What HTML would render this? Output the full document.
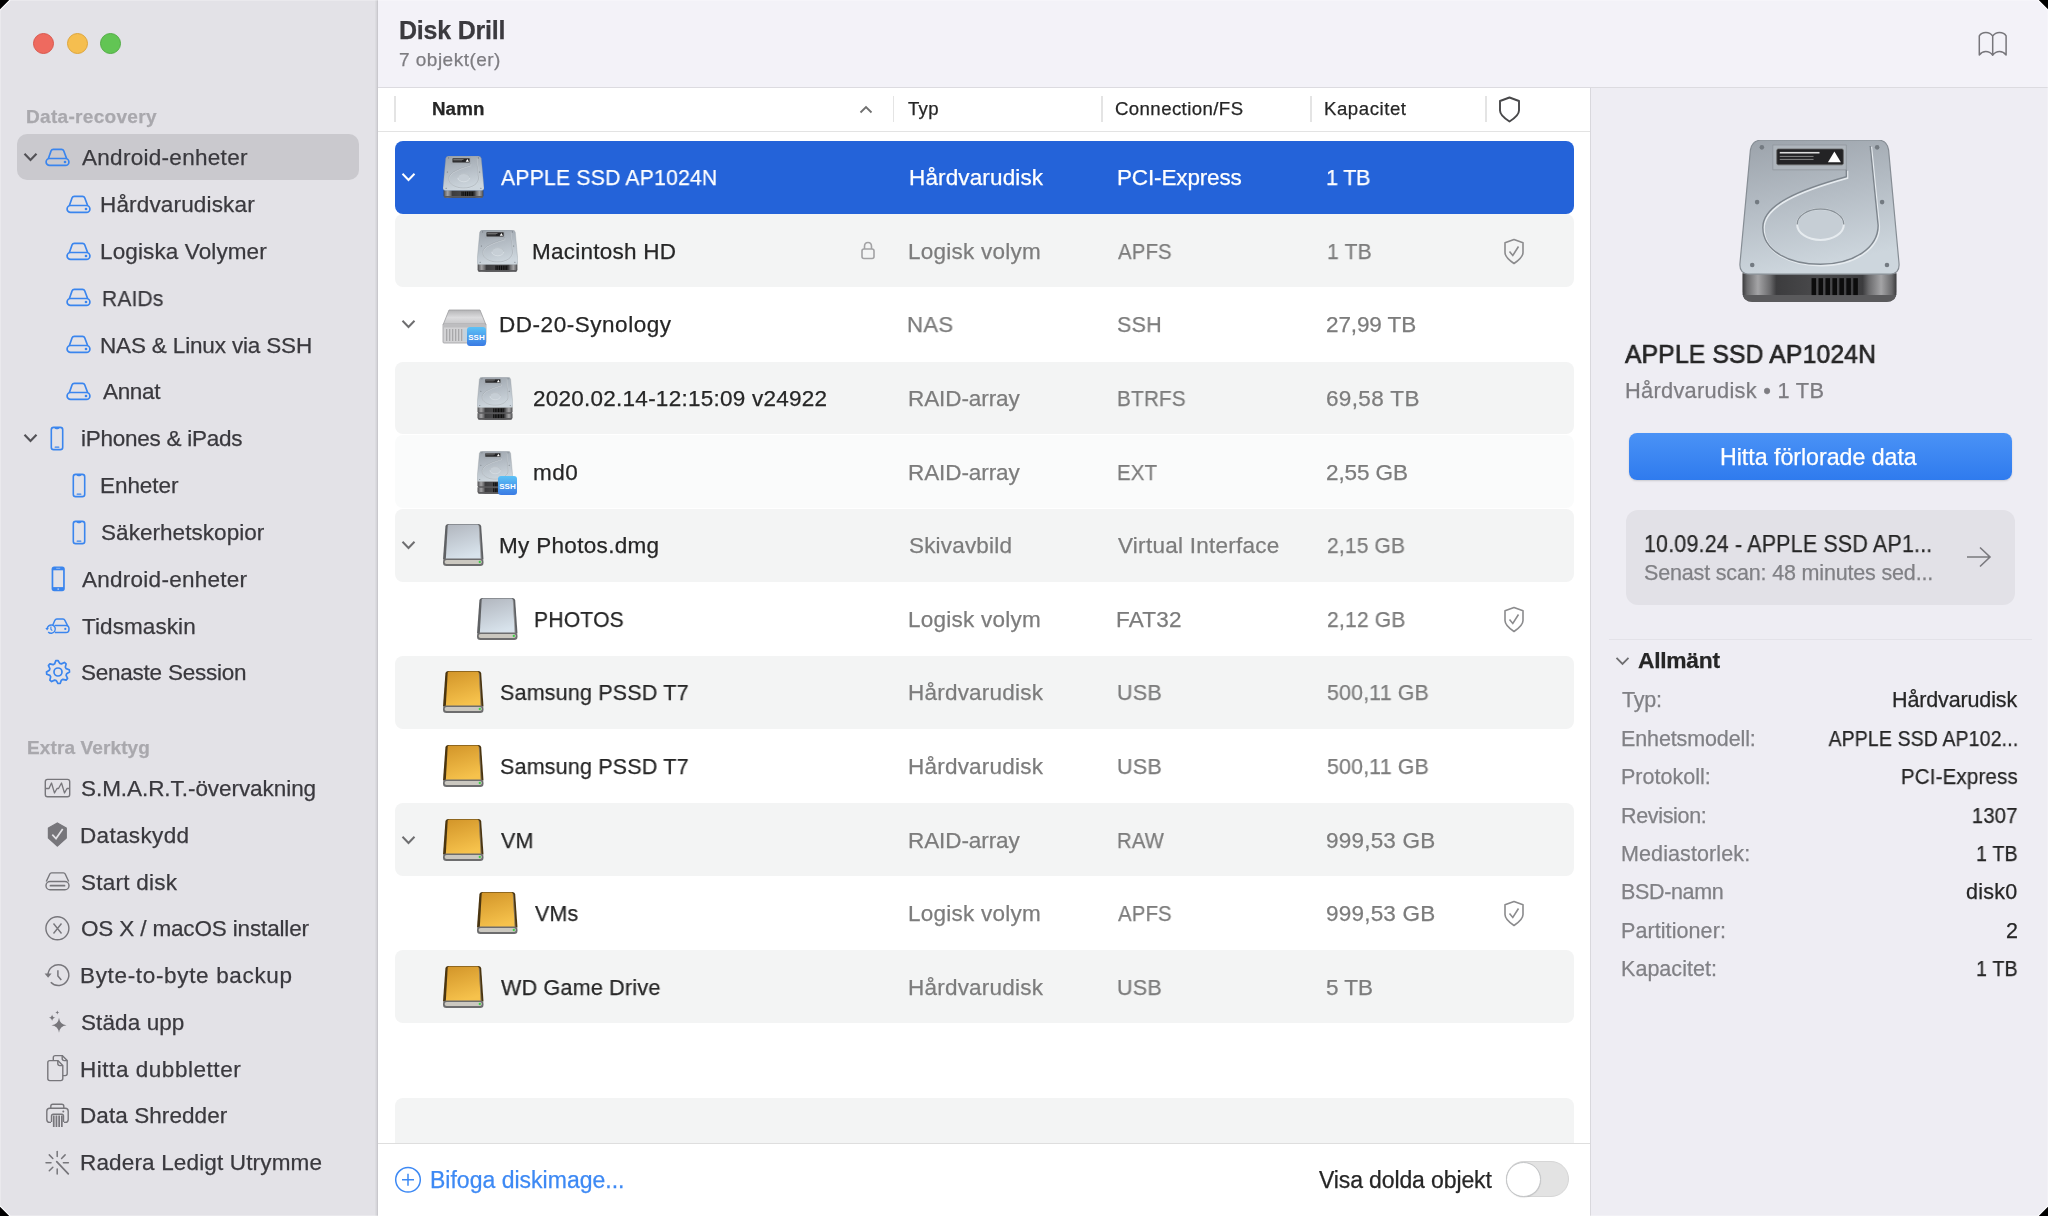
<!DOCTYPE html>
<html><head><meta charset="utf-8">
<style>
*{margin:0;padding:0;box-sizing:border-box}
html,body{width:2048px;height:1216px;overflow:hidden;background:#000}
body{font-family:"Liberation Sans",sans-serif;position:relative}
#win{position:absolute;left:0;top:0;width:2048px;height:1216px;overflow:hidden;background:#fff;clip-path:polygon(9.5px 0,2038.5px 0,2048px 9.5px,2048px 1206.5px,2038.5px 1216px,9.5px 1216px,0 1206.5px,0 9.5px)}
.abs{position:absolute}
.t{position:absolute;white-space:nowrap;line-height:1;will-change:transform;-webkit-text-stroke:0.25px currentColor}
#sidebar{position:absolute;left:0;top:0;width:378px;height:1216px;background:#e3e2e7;border-right:1px solid #c9c8cd;box-shadow:inset -2px 0 0 -0.5px #d6d5da}
.light{position:absolute;width:21px;height:21px;border-radius:50%;top:33px}
#title{position:absolute;left:378px;top:0;width:1670px;height:88px;background:#f3f2f8;border-bottom:1px solid #dcdbe0}
#table{position:absolute;left:378px;top:88px;width:1212px;height:1128px;background:#fff;overflow:hidden}
#right{position:absolute;left:1590px;top:88px;width:458px;height:1128px;background:#eeedf3;border-left:1px solid #d9d8dd}
.row{position:absolute;left:17px;width:1179px;border-radius:8px}
.g{background:#f3f4f4}
.h{background:#fafbfb}
.sel{background:#2463d9}
.csep{position:absolute;width:1.5px;background:#e4e4e4;top:7.5px;height:26px}
</style></head><body>

<svg width="0" height="0" style="position:absolute">
<defs>
 <linearGradient id="plate" x1="0" y1="0" x2="0.25" y2="1">
  <stop offset="0" stop-color="#9ba2aa"/><stop offset="0.5" stop-color="#b4bcc4"/><stop offset="1" stop-color="#cdd6dd"/>
 </linearGradient>
 <linearGradient id="base" x1="0" y1="0" x2="1" y2="0">
  <stop offset="0" stop-color="#3a3a3c"/><stop offset="0.03" stop-color="#6a6a6c"/><stop offset="0.1" stop-color="#a4a4a6"/><stop offset="0.18" stop-color="#6a6a6c"/><stop offset="0.22" stop-color="#3c3c3e"/><stop offset="0.5" stop-color="#4a4a4c"/><stop offset="0.78" stop-color="#3c3c3e"/><stop offset="0.82" stop-color="#6a6a6c"/><stop offset="0.9" stop-color="#a4a4a6"/><stop offset="0.97" stop-color="#6a6a6c"/><stop offset="1" stop-color="#3a3a3c"/>
 </linearGradient>
 <linearGradient id="gplate" x1="0.1" y1="0" x2="0.4" y2="1">
  <stop offset="0" stop-color="#b2b7bf"/><stop offset="1" stop-color="#d8e3ec"/>
 </linearGradient>
 <linearGradient id="yplate" x1="0.1" y1="0" x2="0.4" y2="1">
  <stop offset="0" stop-color="#d3962a"/><stop offset="1" stop-color="#f6c24c"/>
 </linearGradient>
 <linearGradient id="sshg" x1="0" y1="0" x2="0" y2="1">
  <stop offset="0" stop-color="#5cc2f6"/><stop offset="1" stop-color="#3a7be4"/>
 </linearGradient>
 <linearGradient id="nasg" x1="0" y1="0" x2="0" y2="1">
  <stop offset="0" stop-color="#b4b4b6"/><stop offset="0.5" stop-color="#dcdcde"/><stop offset="1" stop-color="#c4c4c6"/>
 </linearGradient>
 <g id="hddtop">
  <path d="M23 0 H138 Q148 0 149.5 10 L160 124 Q161 135 150 135 H10 Q-1 135 0 124 L10.5 10 Q12 0 23 0Z" fill="url(#plate)" stroke="#868d94" stroke-width="1.2"/>
  <path d="M33 5 H107 V30 H33Z" fill="#aeb5bc" stroke="#949ba2" stroke-width="1"/>
  <rect x="37" y="9" width="67" height="16" rx="1.5" fill="#232325" stroke="#666" stroke-width="0.8"/>
  <path d="M95 11.5 L101.5 22.5 H88.5Z" fill="#fff"/>
  <rect x="40" y="12" width="40" height="1.6" fill="#ddd"/>
  <rect x="40" y="16" width="34" height="1" fill="#888"/><rect x="40" y="19" width="34" height="1" fill="#888"/>
  <path d="M107 30 V37 C60 50 23 65 23 88 C23 112 50 125 81 125 C115 125 139 108 139 86 L131 6" fill="none" stroke="#e6ebef" stroke-width="2.4" transform="translate(0.8,1)"/>
  <path d="M107 30 V37 C60 50 23 65 23 88 C23 112 50 125 81 125 C115 125 139 108 139 86 L131 6" fill="none" stroke="#7e868e" stroke-width="1.5"/>
  <ellipse cx="81" cy="85" rx="23.5" ry="15.6" fill="#c6ced5" stroke="#e6ebef" stroke-width="2"/>
  <path d="M57.5 85 A23.5 15.6 0 0 1 104.5 85" fill="none" stroke="#8a9299" stroke-width="1.4"/>
  <g fill="#737a81"><circle cx="22" cy="7.4" r="2.3"/><circle cx="138" cy="7.4" r="2.3"/><circle cx="17.2" cy="62.5" r="2.3"/><circle cx="143" cy="62.5" r="2.3"/><circle cx="12.3" cy="125.8" r="2.3"/><circle cx="147.9" cy="125.8" r="2.3"/></g>
 </g>
 <g id="hddbase">
  <path d="M2.5 0 H157.5 V19 Q157.5 29 147.5 29 H12.5 Q2.5 29 2.5 19Z" fill="url(#base)"/>
  <path d="M2.5 22 H157.5 V19 Q157.5 29 147.5 29 H12.5 Q2.5 29 2.5 19Z" fill="#5a5a5c"/>
  <g fill="#0c0c0c"><rect x="72" y="5" width="4.6" height="17"/><rect x="79" y="5" width="4.6" height="17"/><rect x="86" y="5" width="4.6" height="17"/><rect x="93" y="5" width="4.6" height="17"/><rect x="100" y="5" width="4.6" height="17"/><rect x="107" y="5" width="4.6" height="17"/><rect x="114" y="5" width="4.6" height="17"/></g>
 </g>
 <g id="hdd"><use href="#hddbase" transform="translate(0,134)"/><use href="#hddtop"/></g>
 <g id="raid"><use href="#hddbase" transform="translate(0,160)"/><use href="#hddbase" transform="translate(0,134)"/><use href="#hddtop"/></g>
 <g id="ssh"><rect x="0" y="0" width="19" height="19" rx="3" fill="url(#sshg)"/><text x="9.5" y="13" font-family="Liberation Sans" font-weight="bold" font-size="8" fill="#fff" text-anchor="middle">SSH</text></g>
 <g id="nas">
  <path d="M7 1 H38 L44 16 H1Z" fill="url(#nasg)" stroke="#9c9c9e" stroke-width="0.8"/>
  <rect x="1" y="15" width="43" height="19" rx="1" fill="#d2d2d4" stroke="#a0a0a2" stroke-width="0.8"/>
  <rect x="2" y="15.5" width="41" height="3" fill="#bdbdbf"/>
  <g fill="#a8a8aa"><rect x="4" y="20" width="1.3" height="12"/><rect x="7" y="20" width="1.3" height="12"/><rect x="10" y="20" width="1.3" height="12"/><rect x="13" y="20" width="1.3" height="12"/><rect x="16" y="20" width="1.3" height="12"/><rect x="19" y="20" width="1.3" height="12"/></g>
  <rect x="21" y="20" width="4" height="12" fill="#c4d2dc"/>
 </g>
 <g id="extg">
  <path d="M5.4 0 H35.2 Q37.9 0 38.2 2.6 L40.5 35.5 H0 L2.4 2.6 Q2.7 0 5.4 0Z" fill="#5f6164"/>
  <path d="M6.2 0.6 H34.4 Q35.6 0.6 35.8 1.8 L37.8 35.5 H2.8 L4.7 1.8 Q4.9 0.6 6.2 0.6Z" fill="url(#gplate)"/>
  <path d="M35.8 1.8 L37.8 35.5 H38.6 L36.6 2.4Z" fill="#ffffff" fill-opacity="0.35"/>
  <rect x="0" y="34.6" width="40.5" height="7.5" rx="3.3" fill="#6d6d6e"/>
  <rect x="1.6" y="36" width="37.3" height="4" rx="2" fill="#cbc8c0"/>
  <circle cx="36.8" cy="38" r="1.15" fill="#3ed046"/>
 </g>
 <g id="exty">
  <path d="M5.4 0 H35.2 Q37.9 0 38.2 2.6 L40.5 35.5 H0 L2.4 2.6 Q2.7 0 5.4 0Z" fill="#4a3510"/>
  <path d="M6.2 0.6 H34.4 Q35.6 0.6 35.8 1.8 L37.8 35.5 H2.8 L4.7 1.8 Q4.9 0.6 6.2 0.6Z" fill="url(#yplate)"/>
  <path d="M35.8 1.8 L37.8 35.5 H38.6 L36.6 2.4Z" fill="#ffffff" fill-opacity="0.35"/>
  <rect x="0" y="34.6" width="40.5" height="7.5" rx="3.3" fill="#6d6d6e"/>
  <rect x="1.6" y="36" width="37.3" height="4" rx="2" fill="#cbc8c0"/>
  <circle cx="36.8" cy="38" r="1.15" fill="#3ed046"/>
 </g>
</defs></svg>
<div id="win">
<div id="sidebar">
<div class="light" style="left:33px;background:#ee6a5f;border:0.5px solid #d9574d"></div>
<div class="light" style="left:66.5px;background:#f5be4f;border:0.5px solid #dea53a"></div>
<div class="light" style="left:100px;background:#62c554;border:0.5px solid #52ad45"></div>
<div id="s_dr" class="t" style="left:25.90px;top:107.21px;font-size:19px;font-weight:bold;color:#a9a8ad;letter-spacing:0.314px;">Data-recovery</div>
<div class="abs" style="left:17px;top:134px;width:342px;height:46px;border-radius:10px;background:#cac9ce"></div>
<svg class="abs" style="left:23px;top:152.00px" width="15" height="10" viewBox="0 0 15 10"><path d="M1.5 1.8 L7.5 8 L13.5 1.8" fill="none" stroke="#535257" stroke-width="2.2"/></svg>
<svg class="abs" style="left:45px;top:147.0px" width="26" height="20" viewBox="0 0 26 20"><path d="M3.4 11.5 L6.1 3.8 Q6.7 2.3 8.3 2.3 H16.5 Q18.1 2.3 18.7 3.8 L21.6 11.5" fill="none" stroke="#3a85ee" stroke-width="1.7" stroke-linejoin="round"/><rect x="1.1" y="11.5" width="22.8" height="6.9" rx="3.45" fill="none" stroke="#3a85ee" stroke-width="1.7"/><circle cx="20" cy="14.95" r="1.3" fill="#3a85ee"/></svg>
<div id="s1_0" class="t" style="left:81.80px;top:147.25px;font-size:22.5px;font-weight:normal;color:#3a393e;letter-spacing:0.291px;">Android-enheter</div>
<svg class="abs" style="left:66px;top:193.83px" width="26" height="20" viewBox="0 0 26 20"><path d="M3.4 11.5 L6.1 3.8 Q6.7 2.3 8.3 2.3 H16.5 Q18.1 2.3 18.7 3.8 L21.6 11.5" fill="none" stroke="#3a85ee" stroke-width="1.7" stroke-linejoin="round"/><rect x="1.1" y="11.5" width="22.8" height="6.9" rx="3.45" fill="none" stroke="#3a85ee" stroke-width="1.7"/><circle cx="20" cy="14.95" r="1.3" fill="#3a85ee"/></svg>
<div id="s1_1" class="t" style="left:100.40px;top:194.08px;font-size:22.5px;font-weight:normal;color:#3a393e;letter-spacing:0.159px;">Hårdvarudiskar</div>
<svg class="abs" style="left:66px;top:240.66px" width="26" height="20" viewBox="0 0 26 20"><path d="M3.4 11.5 L6.1 3.8 Q6.7 2.3 8.3 2.3 H16.5 Q18.1 2.3 18.7 3.8 L21.6 11.5" fill="none" stroke="#3a85ee" stroke-width="1.7" stroke-linejoin="round"/><rect x="1.1" y="11.5" width="22.8" height="6.9" rx="3.45" fill="none" stroke="#3a85ee" stroke-width="1.7"/><circle cx="20" cy="14.95" r="1.3" fill="#3a85ee"/></svg>
<div id="s1_2" class="t" style="left:100.40px;top:240.91px;font-size:22.5px;font-weight:normal;color:#3a393e;letter-spacing:0.119px;">Logiska Volymer</div>
<svg class="abs" style="left:66px;top:287.49px" width="26" height="20" viewBox="0 0 26 20"><path d="M3.4 11.5 L6.1 3.8 Q6.7 2.3 8.3 2.3 H16.5 Q18.1 2.3 18.7 3.8 L21.6 11.5" fill="none" stroke="#3a85ee" stroke-width="1.7" stroke-linejoin="round"/><rect x="1.1" y="11.5" width="22.8" height="6.9" rx="3.45" fill="none" stroke="#3a85ee" stroke-width="1.7"/><circle cx="20" cy="14.95" r="1.3" fill="#3a85ee"/></svg>
<div id="s1_3" class="t" style="left:101.60px;top:287.74px;font-size:22.5px;font-weight:normal;color:#3a393e;letter-spacing:0.200px;transform:scaleX(0.9330);transform-origin:left center;">RAIDs</div>
<svg class="abs" style="left:66px;top:334.32px" width="26" height="20" viewBox="0 0 26 20"><path d="M3.4 11.5 L6.1 3.8 Q6.7 2.3 8.3 2.3 H16.5 Q18.1 2.3 18.7 3.8 L21.6 11.5" fill="none" stroke="#3a85ee" stroke-width="1.7" stroke-linejoin="round"/><rect x="1.1" y="11.5" width="22.8" height="6.9" rx="3.45" fill="none" stroke="#3a85ee" stroke-width="1.7"/><circle cx="20" cy="14.95" r="1.3" fill="#3a85ee"/></svg>
<div id="s1_4" class="t" style="left:100.40px;top:334.57px;font-size:22.5px;font-weight:normal;color:#3a393e;letter-spacing:-0.160px;">NAS &amp; Linux via SSH</div>
<svg class="abs" style="left:66px;top:381.15px" width="26" height="20" viewBox="0 0 26 20"><path d="M3.4 11.5 L6.1 3.8 Q6.7 2.3 8.3 2.3 H16.5 Q18.1 2.3 18.7 3.8 L21.6 11.5" fill="none" stroke="#3a85ee" stroke-width="1.7" stroke-linejoin="round"/><rect x="1.1" y="11.5" width="22.8" height="6.9" rx="3.45" fill="none" stroke="#3a85ee" stroke-width="1.7"/><circle cx="20" cy="14.95" r="1.3" fill="#3a85ee"/></svg>
<div id="s1_5" class="t" style="left:102.60px;top:381.40px;font-size:22.5px;font-weight:normal;color:#3a393e;letter-spacing:-0.350px;transform:scaleX(0.9991);transform-origin:left center;">Annat</div>
<svg class="abs" style="left:23px;top:432.98px" width="15" height="10" viewBox="0 0 15 10"><path d="M1.5 1.8 L7.5 8 L13.5 1.8" fill="none" stroke="#535257" stroke-width="2.2"/></svg>
<svg class="abs" style="left:50px;top:425.98px" width="14" height="25" viewBox="0 0 14 25"><rect x="1.3" y="1.4" width="11.4" height="22.2" rx="2.4" fill="none" stroke="#3a85ee" stroke-width="1.6"/><path d="M4.3 1.5 H9.7 Q9.5 3.2 7.8 3.2 H6.2 Q4.5 3.2 4.3 1.5Z" fill="#3a85ee"/><rect x="4.6" y="20.6" width="4.8" height="1.1" rx="0.5" fill="#3a85ee"/></svg>
<div id="s1_6" class="t" style="left:80.80px;top:428.23px;font-size:22.5px;font-weight:normal;color:#3a393e;letter-spacing:-0.253px;">iPhones &amp; iPads</div>
<svg class="abs" style="left:72px;top:472.81px" width="14" height="25" viewBox="0 0 14 25"><rect x="1.3" y="1.4" width="11.4" height="22.2" rx="2.4" fill="none" stroke="#3a85ee" stroke-width="1.6"/><path d="M4.3 1.5 H9.7 Q9.5 3.2 7.8 3.2 H6.2 Q4.5 3.2 4.3 1.5Z" fill="#3a85ee"/><rect x="4.6" y="20.6" width="4.8" height="1.1" rx="0.5" fill="#3a85ee"/></svg>
<div id="s1_7" class="t" style="left:100.40px;top:475.06px;font-size:22.5px;font-weight:normal;color:#3a393e;letter-spacing:-0.060px;">Enheter</div>
<svg class="abs" style="left:72px;top:519.64px" width="14" height="25" viewBox="0 0 14 25"><rect x="1.3" y="1.4" width="11.4" height="22.2" rx="2.4" fill="none" stroke="#3a85ee" stroke-width="1.6"/><path d="M4.3 1.5 H9.7 Q9.5 3.2 7.8 3.2 H6.2 Q4.5 3.2 4.3 1.5Z" fill="#3a85ee"/><rect x="4.6" y="20.6" width="4.8" height="1.1" rx="0.5" fill="#3a85ee"/></svg>
<div id="s1_8" class="t" style="left:101.40px;top:521.89px;font-size:22.5px;font-weight:normal;color:#3a393e;letter-spacing:0.053px;">Säkerhetskopior</div>
<svg class="abs" style="left:50.5px;top:566.47px" width="16" height="26" viewBox="0 0 16 26"><rect x="0.6" y="0.6" width="13.2" height="24.6" rx="2.6" fill="#3a85ee"/><rect x="2.3" y="4.3" width="9.8" height="16.8" fill="#e3e2e7"/><rect x="5.2" y="1.8" width="4" height="0.9" fill="#e3e2e7" fill-opacity="0.6"/><circle cx="7.2" cy="23.1" r="0.9" fill="#e3e2e7" fill-opacity="0.7"/></svg>
<div id="s1_9" class="t" style="left:81.80px;top:568.72px;font-size:22.5px;font-weight:normal;color:#3a393e;letter-spacing:0.264px;">Android-enheter</div>
<svg class="abs" style="left:45px;top:615.3px" width="26" height="20" viewBox="0 0 26 20"><path d="M7.6 10.5 L9.9 5.3 Q10.5 4.1 11.8 4.1 H18 Q19.3 4.1 19.9 5.3 L22.5 10.5" fill="none" stroke="#3a85ee" stroke-width="1.5" stroke-linejoin="round"/><path d="M9.5 10.5 H21 Q24 10.5 24 14 Q24 17.6 21 17.6 H9.8" fill="none" stroke="#3a85ee" stroke-width="1.5"/><circle cx="20.3" cy="13.9" r="1.1" fill="#3a85ee"/><path d="M2.1 14.1 A4.1 4.1 0 1 1 3.2 16.9" fill="none" stroke="#3a85ee" stroke-width="1.4"/><path d="M0.4 12.9 L3.8 12.9 L2.1 15.4Z" fill="#3a85ee"/><path d="M5.9 11.6 V14.2 L7.3 15.6" fill="none" stroke="#3a85ee" stroke-width="1.1"/></svg>
<div id="s1_10" class="t" style="left:81.80px;top:615.55px;font-size:22.5px;font-weight:normal;color:#3a393e;letter-spacing:0.080px;">Tidsmaskin</div>
<svg class="abs" style="left:45px;top:659.13px" width="26" height="26" viewBox="0 0 26 26"><polygon points="24.28,10.76 24.50,13.00 21.63,14.72 21.13,16.37 22.56,19.39 21.13,21.13 17.89,20.32 16.37,21.13 15.24,24.28 13.00,24.50 11.28,21.63 9.63,21.13 6.61,22.56 4.87,21.13 5.68,17.89 4.87,16.37 1.72,15.24 1.50,13.00 4.37,11.28 4.87,9.63 3.44,6.61 4.87,4.87 8.11,5.68 9.63,4.87 10.76,1.72 13.00,1.50 14.72,4.37 16.37,4.87 19.39,3.44 21.13,4.87 20.32,8.11 21.13,9.63" fill="none" stroke="#3a85ee" stroke-width="1.7" stroke-linejoin="round"/><circle cx="13" cy="13" r="4" fill="none" stroke="#3a85ee" stroke-width="1.7"/></svg>
<div id="s1_11" class="t" style="left:80.80px;top:662.38px;font-size:22.5px;font-weight:normal;color:#3a393e;letter-spacing:-0.241px;">Senaste Session</div>
<div id="s_ev" class="t" style="left:26.70px;top:737.61px;font-size:19px;font-weight:bold;color:#a9a8ad;letter-spacing:0.120px;">Extra Verktyg</div>
<svg class="abs" style="left:40px;top:771.70px" width="36" height="32" viewBox="0 0 36 32"><rect x="5.3" y="7.4" width="24.4" height="17.4" rx="2.2" fill="none" stroke="#77767b" stroke-width="1.4"/><path d="M6 16.5 H9 L11.5 11 L14.5 21 L17 16.5 H18.5 L21.5 11 L24.5 21 L27 16.5 H29" fill="none" stroke="#77767b" stroke-width="1.3" stroke-linejoin="round"/></svg>
<div id="s2_0" class="t" style="left:80.50px;top:777.95px;font-size:22.5px;font-weight:normal;color:#3a393e;letter-spacing:-0.057px;">S.M.A.R.T.-övervakning</div>
<svg class="abs" style="left:40px;top:818.48px" width="36" height="32" viewBox="0 0 36 32"><path d="M17.35 5 L26.2 10 V20 L17.35 28 L8.5 20 V10Z" fill="#77767b" stroke="#77767b" stroke-width="1.4" stroke-linejoin="round"/><path d="M12.3 16.7 L16 20.6 L22.7 10.9" fill="none" stroke="#e3e2e7" stroke-width="1.7"/></svg>
<div id="s2_1" class="t" style="left:79.50px;top:824.73px;font-size:22.5px;font-weight:normal;color:#3a393e;letter-spacing:0.337px;">Dataskydd</div>
<svg class="abs" style="left:40px;top:865.26px" width="36" height="32" viewBox="0 0 36 32"><path d="M6.3 16.5 L9.8 9 Q10.3 7.9 11.5 7.9 H23.5 Q24.7 7.9 25.2 9 L28.7 16.5" fill="none" stroke="#77767b" stroke-width="1.4"/><rect x="6" y="16.5" width="23" height="8.3" rx="4.1" fill="none" stroke="#77767b" stroke-width="1.4"/><path d="M10.5 20.7 H24.5" stroke="#77767b" stroke-width="1.8" stroke-linecap="round"/></svg>
<div id="s2_2" class="t" style="left:80.50px;top:871.51px;font-size:22.5px;font-weight:normal;color:#3a393e;letter-spacing:0.260px;">Start disk</div>
<svg class="abs" style="left:40px;top:912.04px" width="36" height="32" viewBox="0 0 36 32"><circle cx="17.4" cy="16.3" r="11.5" fill="none" stroke="#77767b" stroke-width="1.4"/><path d="M13.5 11.5 L21.5 21.5 M21.5 11.5 L13.5 21.5" fill="none" stroke="#77767b" stroke-width="1.4"/></svg>
<div id="s2_3" class="t" style="left:80.50px;top:918.29px;font-size:22.5px;font-weight:normal;color:#3a393e;letter-spacing:-0.157px;">OS X / macOS installer</div>
<svg class="abs" style="left:40px;top:958.82px" width="36" height="32" viewBox="0 0 36 32"><path d="M8 16.4 A10.4 10.4 0 1 1 10.8 23.2" fill="none" stroke="#77767b" stroke-width="1.5"/><path d="M4.6 14.4 L11.6 14.4 L8.1 18.8Z" fill="#77767b"/><path d="M17.9 11.2 V17 L21.3 21.1" fill="none" stroke="#77767b" stroke-width="1.5"/></svg>
<div id="s2_4" class="t" style="left:79.50px;top:965.07px;font-size:22.5px;font-weight:normal;color:#3a393e;letter-spacing:0.660px;">Byte-to-byte backup</div>
<svg class="abs" style="left:40px;top:1005.60px" width="36" height="32" viewBox="0 0 36 32"><path d="M19 11.8 Q19.8 18.5 26.5 19.3 Q19.8 20.1 19 26.8 Q18.2 20.1 11.5 19.3 Q18.2 18.5 19 11.8Z" fill="#77767b"/><path d="M12.1 8.5 Q12.5 11.4 15.4 11.8 Q12.5 12.2 12.1 15.1 Q11.7 12.2 8.8 11.8 Q11.7 11.4 12.1 8.5Z" fill="#77767b"/><path d="M17.3 4.6 Q17.5 6.4 19.3 6.6 Q17.5 6.8 17.3 8.6 Q17.1 6.8 15.3 6.6 Q17.1 6.4 17.3 4.6Z" fill="#77767b"/></svg>
<div id="s2_5" class="t" style="left:80.50px;top:1011.85px;font-size:22.5px;font-weight:normal;color:#3a393e;letter-spacing:0.098px;">Städa upp</div>
<svg class="abs" style="left:40px;top:1052.38px" width="36" height="32" viewBox="0 0 36 32"><g fill="none" stroke="#77767b" stroke-width="1.4" stroke-linejoin="round"><path d="M13.3 8.6 V5.6 Q13.3 3.6 15.3 3.6 H22.2 L27.2 8.6 V21.6 Q27.2 23.6 25.2 23.6 H22.8"/><path d="M22.2 3.6 V6.6 Q22.2 8.6 24.2 8.6 H27.2"/><path d="M9.8 8.6 H17.8 L22.8 13.6 V26.6 Q22.8 28.6 20.8 28.6 H9.8 Q7.8 28.6 7.8 26.6 V10.6 Q7.8 8.6 9.8 8.6Z"/><path d="M17.8 8.6 V11.6 Q17.8 13.6 19.8 13.6 H22.8"/></g></svg>
<div id="s2_6" class="t" style="left:79.50px;top:1058.63px;font-size:22.5px;font-weight:normal;color:#3a393e;letter-spacing:0.540px;">Hitta dubbletter</div>
<svg class="abs" style="left:40px;top:1099.16px" width="36" height="32" viewBox="0 0 36 32"><g fill="none" stroke="#77767b" stroke-width="1.4"><path d="M11 23.4 H9.8 Q6.8 23.4 6.8 20.4 V12.2 Q6.8 9.2 9.8 9.2 H25.2 Q28.2 9.2 28.2 12.2 V20.4 Q28.2 23.4 25.2 23.4 H24"/><path d="M10.8 9.2 V7.2 Q10.8 5.2 12.8 5.2 H21.8 Q23.8 5.2 23.8 7.2 V9.2"/><path d="M11.5 23 V17 Q11.5 15.2 13.3 15.2 H21.7 Q23.5 15.2 23.5 17 V23"/></g><g fill="#77767b"><rect x="12.9" y="16.5" width="1.7" height="11.5"/><rect x="15.6" y="16.5" width="1.7" height="11.5"/><rect x="18.3" y="16.5" width="1.7" height="11.5"/><rect x="21" y="16.5" width="1.7" height="11.5"/><circle cx="23.3" cy="12.5" r="1"/></g></svg>
<div id="s2_7" class="t" style="left:79.50px;top:1105.41px;font-size:22.5px;font-weight:normal;color:#3a393e;letter-spacing:0.075px;">Data Shredder</div>
<svg class="abs" style="left:40px;top:1145.94px" width="36" height="32" viewBox="0 0 36 32"><g stroke="#77767b" stroke-width="1.5" stroke-linecap="round"><line x1="23.40" y1="16.80" x2="28.40" y2="16.80"/><line x1="17.20" y1="23.00" x2="17.20" y2="28.00"/><line x1="12.82" y1="21.18" x2="9.28" y2="24.72"/><line x1="11.00" y1="16.80" x2="6.00" y2="16.80"/><line x1="12.82" y1="12.42" x2="9.28" y2="8.88"/><line x1="17.20" y1="10.60" x2="17.20" y2="5.60"/><line x1="21.58" y1="12.42" x2="25.12" y2="8.88"/><line x1="16.7" y1="15.7" x2="28.3" y2="27.9" stroke-width="1.7"/></g></svg>
<div id="s2_8" class="t" style="left:79.50px;top:1152.19px;font-size:22.5px;font-weight:normal;color:#3a393e;letter-spacing:0.155px;">Radera Ledigt Utrymme</div>
</div>
<div id="title">
<div id="ti" class="t" style="left:20.70px;top:18.33px;font-size:25px;font-weight:bold;color:#3b3a3f;letter-spacing:-0.220px;">Disk Drill</div>
<div id="ti2" class="t" style="left:20.60px;top:50.41px;font-size:19px;font-weight:normal;color:#7d7c81;letter-spacing:0.481px;">7 objekt(er)</div>
<svg class="abs" style="left:1592px;top:25px" width="44" height="36" viewBox="0 0 44 36"><g fill="none" stroke="#77767b" stroke-width="1.5" stroke-linejoin="round"><path d="M22.7 11 C21 8.6 18.6 7.4 15.9 7.4 C13.1 7.4 10.6 8.6 9.3 10.8 V30 Q12 26.6 15.8 26.6 Q19.8 26.6 22.7 30.2 Q25.6 26.6 29.6 26.6 Q33.4 26.6 36.1 30 V10.8 C34.8 8.6 32.3 7.4 29.5 7.4 C26.8 7.4 24.4 8.6 22.7 11 V30.2"/></g></svg>
</div>
<div id="table">
<div class="abs" style="left:0;top:42.5px;width:1212px;height:1.5px;background:#e3e3e3"></div>
<div class="csep" style="left:16px"></div>
<div class="csep" style="left:514.5px"></div>
<div class="csep" style="left:723px"></div>
<div class="csep" style="left:932px"></div>
<div class="csep" style="left:1107px"></div>
<div id="h_namn" class="t" style="left:54.00px;top:12.28px;font-size:18.8px;font-weight:bold;color:#262626;letter-spacing:0.060px;">Namn</div>
<svg class="abs" style="left:481px;top:17px" width="14" height="9" viewBox="0 0 14 9"><path d="M1.5 7.5 L7 2 L12.5 7.5" fill="none" stroke="#707070" stroke-width="1.8"/></svg>
<div id="h_typ" class="t" style="left:529.80px;top:12.45px;font-size:18.6px;font-weight:normal;color:#262626;letter-spacing:0.270px;">Typ</div>
<div id="h_conn" class="t" style="left:737.40px;top:12.45px;font-size:18.6px;font-weight:normal;color:#262626;letter-spacing:0.420px;">Connection/FS</div>
<div id="h_kap" class="t" style="left:946.40px;top:12.45px;font-size:18.6px;font-weight:normal;color:#262626;letter-spacing:0.563px;">Kapacitet</div>
<svg class="abs" style="left:1120px;top:7.5px" width="23" height="27" viewBox="0 0 23 27"><path d="M11.5 1.5 L21 5 V14.5 Q21 19.5 11.5 25.5 Q2 19.5 2 14.5 V5Z" fill="none" stroke="#48484a" stroke-width="1.9" stroke-linejoin="round"/></svg>
<div class="row sel" style="top:52.70px;height:72.9px">
<svg class="abs" style="left:6px;top:31.5px" width="15" height="10" viewBox="0 0 15 10"><path d="M1.5 1.8 L7.5 8 L13.5 1.8" fill="none" stroke="#fff" stroke-width="2"/></svg>
<svg class="abs" style="left:48px;top:15.450000000000003px" width="41" height="42" viewBox="0 0 160 164"><use href="#hdd"/></svg>
<div id="r0n" class="t" style="left:106.20px;top:26.45px;font-size:22.5px;font-weight:normal;color:#fff;letter-spacing:0.200px;transform:scaleX(0.9420);transform-origin:left center;">APPLE SSD AP1024N</div>
<div id="r0t" class="t" style="left:513.60px;top:26.45px;font-size:22.5px;font-weight:normal;color:#fff;letter-spacing:0.137px;">Hårdvarudisk</div>
<div id="r0c" class="t" style="left:722.00px;top:26.45px;font-size:22.5px;font-weight:normal;color:#fff;letter-spacing:-0.144px;">PCI-Express</div>
<div id="r0k" class="t" style="left:931.30px;top:26.45px;font-size:22.5px;font-weight:normal;color:#fff;letter-spacing:-0.350px;transform:scaleX(0.9669);transform-origin:left center;">1 TB</div>
</div>
<div class="row g" style="top:126.30px;height:72.9px">
<svg class="abs" style="left:82px;top:15.450000000000003px" width="41" height="42" viewBox="0 0 160 164"><use href="#hdd"/></svg>
<div id="r1n" class="t" style="left:137.20px;top:26.45px;font-size:22.5px;font-weight:normal;color:#262626;letter-spacing:0.246px;">Macintosh HD</div>
<div id="r1t" class="t" style="left:512.60px;top:26.45px;font-size:22.5px;font-weight:normal;color:#7c7c7c;letter-spacing:0.256px;">Logisk volym</div>
<div id="r1c" class="t" style="left:723.00px;top:26.45px;font-size:22.5px;font-weight:normal;color:#7c7c7c;letter-spacing:0.200px;transform:scaleX(0.9034);transform-origin:left center;">APFS</div>
<div id="r1k" class="t" style="left:931.60px;top:26.45px;font-size:22.5px;font-weight:normal;color:#7c7c7c;letter-spacing:0.200px;transform:scaleX(0.9363);transform-origin:left center;">1 TB</div>
<svg class="abs" style="left:466px;top:26.5px" width="14" height="19" viewBox="0 0 14 19"><path d="M3.5 8 V5.5 Q3.5 1.5 7 1.5 Q10.5 1.5 10.5 5.5 V8" fill="none" stroke="#a2a2a4" stroke-width="1.6"/><rect x="1" y="8" width="12" height="9.5" rx="2" fill="none" stroke="#a2a2a4" stroke-width="1.6"/></svg>
<svg class="abs" style="left:1108px;top:23.5px" width="22" height="27" viewBox="0 0 22 27"><path d="M11 1.5 L20 4.8 V14.5 Q20 19.5 11 25.5 Q2 19.5 2 14.5 V4.8Z" fill="none" stroke="#8b8b8d" stroke-width="1.6" stroke-linejoin="round"/><path d="M6.5 13.5 L9.8 17.5 L15.5 8.5" fill="none" stroke="#8b8b8d" stroke-width="1.6"/></svg>
</div>
<div class="row " style="top:199.90px;height:72.9px">
<svg class="abs" style="left:6px;top:31.5px" width="15" height="10" viewBox="0 0 15 10"><path d="M1.5 1.8 L7.5 8 L13.5 1.8" fill="none" stroke="#6e6e70" stroke-width="2"/></svg>
<svg class="abs" style="left:47px;top:20.950000000000003px" width="45" height="36" viewBox="0 0 45 36"><use href="#nas"/></svg><svg class="abs" style="left:72px;top:39.45px" width="19" height="19" viewBox="0 0 19 19"><use href="#ssh"/></svg>
<div id="r2n" class="t" style="left:104.30px;top:26.45px;font-size:22.5px;font-weight:normal;color:#262626;letter-spacing:0.537px;">DD-20-Synology</div>
<div id="r2t" class="t" style="left:512.40px;top:26.45px;font-size:22.5px;font-weight:normal;color:#7c7c7c;letter-spacing:0.200px;transform:scaleX(0.9868);transform-origin:left center;">NAS</div>
<div id="r2c" class="t" style="left:722.00px;top:26.45px;font-size:22.5px;font-weight:normal;color:#7c7c7c;letter-spacing:0.200px;transform:scaleX(0.9553);transform-origin:left center;">SSH</div>
<div id="r2k" class="t" style="left:930.90px;top:26.45px;font-size:22.5px;font-weight:normal;color:#7c7c7c;letter-spacing:-0.107px;">27,99 TB</div>
</div>
<div class="row g" style="top:273.50px;height:72.9px">
<svg class="abs" style="left:82px;top:15.450000000000003px" width="36" height="43" viewBox="0 0 160 190"><use href="#raid"/></svg>
<div id="r3n" class="t" style="left:138.20px;top:26.45px;font-size:22.5px;font-weight:normal;color:#262626;letter-spacing:0.252px;">2020.02.14-12:15:09 v24922</div>
<div id="r3t" class="t" style="left:512.60px;top:26.45px;font-size:22.5px;font-weight:normal;color:#7c7c7c;letter-spacing:-0.080px;">RAID-array</div>
<div id="r3c" class="t" style="left:722.00px;top:26.45px;font-size:22.5px;font-weight:normal;color:#7c7c7c;letter-spacing:0.200px;transform:scaleX(0.9214);transform-origin:left center;">BTRFS</div>
<div id="r3k" class="t" style="left:930.90px;top:26.45px;font-size:22.5px;font-weight:normal;color:#7c7c7c;letter-spacing:0.361px;">69,58 TB</div>
</div>
<div class="row h" style="top:347.10px;height:72.9px">
<svg class="abs" style="left:82px;top:15.450000000000003px" width="36" height="43" viewBox="0 0 160 190"><use href="#raid"/></svg><svg class="abs" style="left:103px;top:40.45px" width="19" height="19" viewBox="0 0 19 19"><use href="#ssh"/></svg>
<div id="r4n" class="t" style="left:138.20px;top:26.45px;font-size:22.5px;font-weight:normal;color:#262626;letter-spacing:0.540px;">md0</div>
<div id="r4t" class="t" style="left:512.60px;top:26.45px;font-size:22.5px;font-weight:normal;color:#7c7c7c;letter-spacing:-0.080px;">RAID-array</div>
<div id="r4c" class="t" style="left:722.00px;top:26.45px;font-size:22.5px;font-weight:normal;color:#7c7c7c;letter-spacing:0.200px;transform:scaleX(0.9051);transform-origin:left center;">EXT</div>
<div id="r4k" class="t" style="left:930.90px;top:26.45px;font-size:22.5px;font-weight:normal;color:#7c7c7c;letter-spacing:-0.090px;">2,55 GB</div>
</div>
<div class="row g" style="top:420.70px;height:72.9px">
<svg class="abs" style="left:6px;top:31.5px" width="15" height="10" viewBox="0 0 15 10"><path d="M1.5 1.8 L7.5 8 L13.5 1.8" fill="none" stroke="#6e6e70" stroke-width="2"/></svg>
<svg class="abs" style="left:48px;top:15.450000000000003px" width="42" height="44" viewBox="0 0 42 44"><use href="#extg"/></svg>
<div id="r5n" class="t" style="left:104.30px;top:26.45px;font-size:22.5px;font-weight:normal;color:#262626;letter-spacing:0.315px;">My Photos.dmg</div>
<div id="r5t" class="t" style="left:513.60px;top:26.45px;font-size:22.5px;font-weight:normal;color:#7c7c7c;letter-spacing:0.180px;">Skivavbild</div>
<div id="r5c" class="t" style="left:723.00px;top:26.45px;font-size:22.5px;font-weight:normal;color:#7c7c7c;letter-spacing:0.261px;">Virtual Interface</div>
<div id="r5k" class="t" style="left:931.60px;top:26.45px;font-size:22.5px;font-weight:normal;color:#7c7c7c;letter-spacing:0.200px;transform:scaleX(0.9310);transform-origin:left center;">2,15 GB</div>
</div>
<div class="row " style="top:494.30px;height:72.9px">
<svg class="abs" style="left:82px;top:15.450000000000003px" width="42" height="44" viewBox="0 0 42 44"><use href="#extg"/></svg>
<div id="r6n" class="t" style="left:138.80px;top:26.45px;font-size:22.5px;font-weight:normal;color:#262626;letter-spacing:0.200px;transform:scaleX(0.9387);transform-origin:left center;">PHOTOS</div>
<div id="r6t" class="t" style="left:512.60px;top:26.45px;font-size:22.5px;font-weight:normal;color:#7c7c7c;letter-spacing:0.256px;">Logisk volym</div>
<div id="r6c" class="t" style="left:721.00px;top:26.45px;font-size:22.5px;font-weight:normal;color:#7c7c7c;letter-spacing:0.224px;">FAT32</div>
<div id="r6k" class="t" style="left:931.60px;top:26.45px;font-size:22.5px;font-weight:normal;color:#7c7c7c;letter-spacing:0.200px;transform:scaleX(0.9356);transform-origin:left center;">2,12 GB</div>
<svg class="abs" style="left:1108px;top:23.5px" width="22" height="27" viewBox="0 0 22 27"><path d="M11 1.5 L20 4.8 V14.5 Q20 19.5 11 25.5 Q2 19.5 2 14.5 V4.8Z" fill="none" stroke="#8b8b8d" stroke-width="1.6" stroke-linejoin="round"/><path d="M6.5 13.5 L9.8 17.5 L15.5 8.5" fill="none" stroke="#8b8b8d" stroke-width="1.6"/></svg>
</div>
<div class="row g" style="top:567.90px;height:72.9px">
<svg class="abs" style="left:48px;top:15.450000000000003px" width="42" height="44" viewBox="0 0 42 44"><use href="#exty"/></svg>
<div id="r7n" class="t" style="left:105.20px;top:26.45px;font-size:22.5px;font-weight:normal;color:#262626;letter-spacing:0.200px;transform:scaleX(0.9550);transform-origin:left center;">Samsung PSSD T7</div>
<div id="r7t" class="t" style="left:512.60px;top:26.45px;font-size:22.5px;font-weight:normal;color:#7c7c7c;letter-spacing:0.218px;">Hårdvarudisk</div>
<div id="r7c" class="t" style="left:722.00px;top:26.45px;font-size:22.5px;font-weight:normal;color:#7c7c7c;letter-spacing:0.200px;transform:scaleX(0.9574);transform-origin:left center;">USB</div>
<div id="r7k" class="t" style="left:931.60px;top:26.45px;font-size:22.5px;font-weight:normal;color:#7c7c7c;letter-spacing:0.200px;transform:scaleX(0.9464);transform-origin:left center;">500,11 GB</div>
</div>
<div class="row " style="top:641.50px;height:72.9px">
<svg class="abs" style="left:48px;top:15.450000000000003px" width="42" height="44" viewBox="0 0 42 44"><use href="#exty"/></svg>
<div id="r8n" class="t" style="left:105.20px;top:26.45px;font-size:22.5px;font-weight:normal;color:#262626;letter-spacing:0.200px;transform:scaleX(0.9550);transform-origin:left center;">Samsung PSSD T7</div>
<div id="r8t" class="t" style="left:512.60px;top:26.45px;font-size:22.5px;font-weight:normal;color:#7c7c7c;letter-spacing:0.218px;">Hårdvarudisk</div>
<div id="r8c" class="t" style="left:722.00px;top:26.45px;font-size:22.5px;font-weight:normal;color:#7c7c7c;letter-spacing:0.200px;transform:scaleX(0.9574);transform-origin:left center;">USB</div>
<div id="r8k" class="t" style="left:931.60px;top:26.45px;font-size:22.5px;font-weight:normal;color:#7c7c7c;letter-spacing:0.200px;transform:scaleX(0.9464);transform-origin:left center;">500,11 GB</div>
</div>
<div class="row g" style="top:715.10px;height:72.9px">
<svg class="abs" style="left:6px;top:31.5px" width="15" height="10" viewBox="0 0 15 10"><path d="M1.5 1.8 L7.5 8 L13.5 1.8" fill="none" stroke="#6e6e70" stroke-width="2"/></svg>
<svg class="abs" style="left:48px;top:15.450000000000003px" width="42" height="44" viewBox="0 0 42 44"><use href="#exty"/></svg>
<div id="r9n" class="t" style="left:106.20px;top:26.45px;font-size:22.5px;font-weight:normal;color:#262626;letter-spacing:0.200px;transform:scaleX(0.9526);transform-origin:left center;">VM</div>
<div id="r9t" class="t" style="left:512.60px;top:26.45px;font-size:22.5px;font-weight:normal;color:#7c7c7c;letter-spacing:-0.080px;">RAID-array</div>
<div id="r9c" class="t" style="left:722.00px;top:26.45px;font-size:22.5px;font-weight:normal;color:#7c7c7c;letter-spacing:0.200px;transform:scaleX(0.9004);transform-origin:left center;">RAW</div>
<div id="r9k" class="t" style="left:930.90px;top:26.45px;font-size:22.5px;font-weight:normal;color:#7c7c7c;letter-spacing:0.209px;">999,53 GB</div>
</div>
<div class="row " style="top:788.70px;height:72.9px">
<svg class="abs" style="left:82px;top:15.450000000000003px" width="42" height="44" viewBox="0 0 42 44"><use href="#exty"/></svg>
<div id="r10n" class="t" style="left:139.80px;top:26.45px;font-size:22.5px;font-weight:normal;color:#262626;letter-spacing:0.200px;transform:scaleX(0.9489);transform-origin:left center;">VMs</div>
<div id="r10t" class="t" style="left:512.60px;top:26.45px;font-size:22.5px;font-weight:normal;color:#7c7c7c;letter-spacing:0.256px;">Logisk volym</div>
<div id="r10c" class="t" style="left:723.00px;top:26.45px;font-size:22.5px;font-weight:normal;color:#7c7c7c;letter-spacing:0.200px;transform:scaleX(0.9034);transform-origin:left center;">APFS</div>
<div id="r10k" class="t" style="left:930.90px;top:26.45px;font-size:22.5px;font-weight:normal;color:#7c7c7c;letter-spacing:0.209px;">999,53 GB</div>
<svg class="abs" style="left:1108px;top:23.5px" width="22" height="27" viewBox="0 0 22 27"><path d="M11 1.5 L20 4.8 V14.5 Q20 19.5 11 25.5 Q2 19.5 2 14.5 V4.8Z" fill="none" stroke="#8b8b8d" stroke-width="1.6" stroke-linejoin="round"/><path d="M6.5 13.5 L9.8 17.5 L15.5 8.5" fill="none" stroke="#8b8b8d" stroke-width="1.6"/></svg>
</div>
<div class="row g" style="top:862.30px;height:72.9px">
<svg class="abs" style="left:48px;top:15.450000000000003px" width="42" height="44" viewBox="0 0 42 44"><use href="#exty"/></svg>
<div id="r11n" class="t" style="left:106.20px;top:26.45px;font-size:22.5px;font-weight:normal;color:#262626;letter-spacing:0.200px;transform:scaleX(0.9587);transform-origin:left center;">WD Game Drive</div>
<div id="r11t" class="t" style="left:512.60px;top:26.45px;font-size:22.5px;font-weight:normal;color:#7c7c7c;letter-spacing:0.218px;">Hårdvarudisk</div>
<div id="r11c" class="t" style="left:722.00px;top:26.45px;font-size:22.5px;font-weight:normal;color:#7c7c7c;letter-spacing:0.200px;transform:scaleX(0.9574);transform-origin:left center;">USB</div>
<div id="r11k" class="t" style="left:930.90px;top:26.45px;font-size:22.5px;font-weight:normal;color:#7c7c7c;letter-spacing:-0.060px;">5 TB</div>
</div>
<div class="row g" style="top:1009.50px;height:72.9px"></div>
<div class="abs" style="left:0;top:1055px;width:1212px;height:73px;background:#fff;border-top:1.5px solid #dedede"></div>
<svg class="abs" style="left:15px;top:1076.5px" width="30" height="30" viewBox="0 0 30 30"><circle cx="15" cy="14.8" r="12.3" fill="none" stroke="#3d89f4" stroke-width="1.5"/><path d="M15 8.8 V20.8 M9 14.8 H21" stroke="#3d89f4" stroke-width="1.5"/></svg>
<div id="b_add" class="t" style="left:52.20px;top:1081.13px;font-size:23px;font-weight:normal;color:#3d89f4;letter-spacing:0.010px;">Bifoga diskimage...</div>
<div id="b_vis" class="t" style="left:940.50px;top:1081.03px;font-size:23px;font-weight:normal;color:#262626;letter-spacing:-0.121px;">Visa dolda objekt</div>
<div class="abs" style="left:1128.3px;top:1073px;width:62.6px;height:36px;border-radius:18px;background:#e3e3e3;border:1px solid #d6d6d6"></div>
<div class="abs" style="left:1128.3px;top:1073.5px;width:35px;height:35px;border-radius:50%;background:#fff;border:1px solid #c4c6c8;box-shadow:0 0.5px 1px rgba(0,0,0,0.15)"></div>
</div>
<div id="right">
<svg class="abs" style="left:148px;top:51.5px" width="161" height="163" viewBox="0 0 160 164"><use href="#hdd"/></svg>
<div id="p_title" class="t" style="left:34.40px;top:252.79px;font-size:26px;font-weight:normal;color:#262626;letter-spacing:0.200px;transform:scaleX(0.9478);transform-origin:left center;-webkit-text-stroke:0.7px #262626;">APPLE SSD AP1024N</div>
<div id="p_sub" class="t" style="left:33.90px;top:292.34px;font-size:21.8px;font-weight:normal;color:#7d7c81;letter-spacing:0.290px;">Hårdvarudisk • 1 TB</div>
<div class="abs" style="left:38px;top:345px;width:383px;height:47px;border-radius:8px;background:linear-gradient(#4a92f6,#2f7bee);box-shadow:0 1px 2px rgba(0,0,0,0.15)"></div>
<div id="p_btn" class="t" style="left:128.80px;top:358.26px;font-size:23.2px;font-weight:normal;color:#fff;letter-spacing:-0.026px;">Hitta förlorade data</div>
<div class="abs" style="left:35px;top:422px;width:389px;height:95px;border-radius:12px;background:#e2e1e7"></div>
<div id="p_c1" class="t" style="left:53.20px;top:445.36px;font-size:23.2px;font-weight:normal;color:#262626;letter-spacing:0.200px;transform:scaleX(0.9238);transform-origin:left center;">10.09.24 - APPLE SSD AP1...</div>
<div id="p_c2" class="t" style="left:52.90px;top:475.30px;font-size:21.5px;font-weight:normal;color:#808085;letter-spacing:-0.164px;">Senast scan: 48 minutes sed...</div>
<svg class="abs" style="left:375px;top:458px" width="26" height="22" viewBox="0 0 26 22"><path d="M1 11 H24 M14 1.5 L24 11 L14 20.5" fill="none" stroke="#7a797e" stroke-width="1.6"/></svg>
<div class="abs" style="left:18px;top:551px;width:423px;height:1px;background:#e3e2e8"></div>
<svg class="abs" style="left:24px;top:568px" width="15" height="10" viewBox="0 0 15 10"><path d="M1.5 1.8 L7.5 8 L13.5 1.8" fill="none" stroke="#6e6e70" stroke-width="1.8"/></svg>
<div id="p_allm" class="t" style="left:46.60px;top:560.60px;font-size:22.8px;font-weight:bold;color:#262626;letter-spacing:-0.270px;">Allmänt</div>
<div id="pl0" class="t" style="left:31.00px;top:602.40px;font-size:21.5px;font-weight:normal;color:#808085;letter-spacing:-0.240px;">Typ:</div>
<div id="pv0" class="t" style="right:31.00px;top:602.40px;font-size:21.5px;font-weight:normal;color:#262626;letter-spacing:-0.136px;">Hårdvarudisk</div>
<div id="pl1" class="t" style="left:30.00px;top:640.80px;font-size:21.5px;font-weight:normal;color:#808085;letter-spacing:-0.121px;">Enhetsmodell:</div>
<div id="pv1" class="t" style="right:30.00px;top:640.80px;font-size:21.5px;font-weight:normal;color:#262626;letter-spacing:0.200px;transform:scaleX(0.9021);transform-origin:right center;">APPLE SSD AP102...</div>
<div id="pl2" class="t" style="left:30.00px;top:679.20px;font-size:21.5px;font-weight:normal;color:#808085;letter-spacing:0.020px;">Protokoll:</div>
<div id="pv2" class="t" style="right:30.00px;top:679.20px;font-size:21.5px;font-weight:normal;color:#262626;letter-spacing:0.200px;transform:scaleX(0.9516);transform-origin:right center;">PCI-Express</div>
<div id="pl3" class="t" style="left:30.00px;top:717.60px;font-size:21.5px;font-weight:normal;color:#808085;letter-spacing:-0.338px;">Revision:</div>
<div id="pv3" class="t" style="right:30.00px;top:717.60px;font-size:21.5px;font-weight:normal;color:#262626;letter-spacing:0.200px;transform:scaleX(0.9421);transform-origin:right center;">1307</div>
<div id="pl4" class="t" style="left:30.00px;top:756.00px;font-size:21.5px;font-weight:normal;color:#808085;letter-spacing:0.105px;">Mediastorlek:</div>
<div id="pv4" class="t" style="right:30.00px;top:756.00px;font-size:21.5px;font-weight:normal;color:#262626;letter-spacing:0.200px;transform:scaleX(0.9112);transform-origin:right center;">1 TB</div>
<div id="pl5" class="t" style="left:30.00px;top:794.40px;font-size:21.5px;font-weight:normal;color:#808085;letter-spacing:-0.350px;transform:scaleX(0.9972);transform-origin:left center;">BSD-namn</div>
<div id="pv5" class="t" style="right:30.00px;top:794.40px;font-size:21.5px;font-weight:normal;color:#262626;letter-spacing:0.270px;">disk0</div>
<div id="pl6" class="t" style="left:30.00px;top:832.80px;font-size:21.5px;font-weight:normal;color:#808085;letter-spacing:0.082px;">Partitioner:</div>
<div id="pv6" class="t" style="right:30.00px;top:832.80px;font-size:21.5px;font-weight:normal;color:#262626;letter-spacing:0.000px;">2</div>
<div id="pl7" class="t" style="left:30.00px;top:871.20px;font-size:21.5px;font-weight:normal;color:#808085;letter-spacing:0.040px;">Kapacitet:</div>
<div id="pv7" class="t" style="right:30.00px;top:871.20px;font-size:21.5px;font-weight:normal;color:#262626;letter-spacing:0.200px;transform:scaleX(0.9112);transform-origin:right center;">1 TB</div>
</div>
<svg class="abs" style="left:0;top:0" width="2048" height="1216"><g stroke="#fafafc" stroke-width="1.2"><line x1="0" y1="10" x2="10" y2="0"/><line x1="2038" y1="0" x2="2048" y2="10"/><line x1="2048" y1="1206" x2="2038" y2="1216"/><line x1="10" y1="1216" x2="0" y2="1206"/></g><rect x="0.5" y="0.5" width="2047" height="1215" fill="none" stroke="rgba(255,255,255,0.25)" stroke-width="1"/></svg>
</div></body></html>
